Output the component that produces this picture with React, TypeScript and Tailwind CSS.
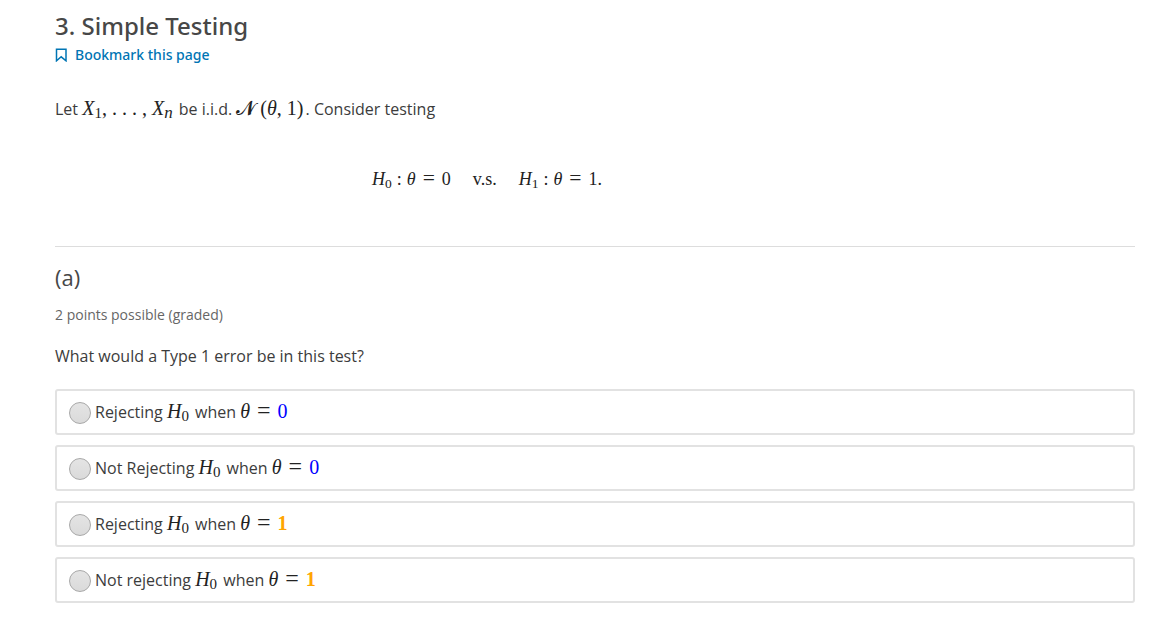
import type { ReactNode } from 'react'

type Choice = { id: string; lead: string; value: number; color: string }

const choices: Choice[] = [
  { id: 'reject-0', lead: 'Rejecting', value: 0, color: 'text-[#0000ff]' },
  { id: 'not-reject-0', lead: 'Not Rejecting', value: 0, color: 'text-[#0000ff]' },
  { id: 'reject-1', lead: 'Rejecting', value: 1, color: 'text-[#ffa500] font-bold' },
  { id: 'not-reject-1', lead: 'Not rejecting', value: 1, color: 'text-[#ffa500] font-bold' },
]

function MathText({ children, className = 'text-xl mr-0.5' }: { children: ReactNode; className?: string }) {
  return (
    <span className={`font-['Liberation_Serif',serif] leading-none whitespace-nowrap text-[#222] ${className}`}>
      {children}
    </span>
  )
}

function Sym({ name, sub, italicSub }: { name: string; sub?: string; italicSub?: boolean }) {
  return (
    <>
      <i>{name}</i>
      {sub && <sub className={`-bottom-[3px] ${italicSub ? 'text-[85%] italic' : 'text-[75%]'}`}>{sub}</sub>}
    </>
  )
}

const Colon = () => <span className="mx-[5px]">:</span>
const Equals = () => <span className="mx-[7px] text-[120%] leading-none">=</span>

function BookmarkIcon() {
  return (
    <svg viewBox="0 0 12 14" className="h-[14px] w-3" fill="none" stroke="currentColor" strokeWidth="1.5" aria-hidden="true">
      <path d="M1.5 1.2h9.5v11.6L6.2 8.8l-4.7 4z" />
    </svg>
  )
}

export default function App() {
  return (
    <main className="bg-white pt-2.5 pr-[27px] pb-6 pl-[55px] font-['Open_Sans',sans-serif] text-base text-[#3c3c3c]">
      <h1 className="font-['Noto_Sans','Open_Sans',sans-serif] text-2xl font-medium text-[#474747]">
        3. Simple Testing
      </h1>
      <a
        href="#bookmark"
        className="mt-[3px] flex items-center gap-2 font-['Noto_Sans','Open_Sans',sans-serif] text-sm font-medium text-[#0075b4]"
      >
        <BookmarkIcon />
        Bookmark this page
      </a>

      <p className="mt-[30px] leading-7">
        Let{' '}
        <MathText>
          <Sym name="X" sub="1" />, . . . , <Sym name="X" sub="n" italicSub />
        </MathText>{' '}
        be i.i.d.{' '}
        <MathText>
          𝓝 (<i>θ</i>, 1)
        </MathText>
        . Consider testing
      </p>

      <div className="mt-[45px] flex w-4/5 items-baseline justify-center gap-[22px]">
        <MathText className="text-lg">
          <Sym name="H" sub="0" />
          <Colon />
          <i>θ</i>
          <Equals />0
        </MathText>
        <MathText className="text-lg">v.s.</MathText>
        <MathText className="text-lg">
          <Sym name="H" sub="1" />
          <Colon />
          <i>θ</i>
          <Equals />
          1.
        </MathText>
      </div>

      <hr className="mt-14 border-[#ddd]" />

      <section>
        <h2 className="mt-4 text-[22px] leading-7 text-[#474747]">(a)</h2>
        <p className="mt-3.5 text-sm text-[#666]">2 points possible (graded)</p>
        <form className="mt-[19px]">
          <fieldset>
            <legend>What would a Type 1 error be in this test?</legend>
            <div className="mt-[21px] flex flex-col gap-2.5">
              {choices.map((c) => (
                <label
                  key={c.id}
                  htmlFor={c.id}
                  className="flex h-[46px] items-center gap-1 rounded-[3px] border-2 border-[#e2e2e2] px-3"
                >
                  <input
                    id={c.id}
                    type="radio"
                    name="type-1-error"
                    className="mt-0.5 size-[22px] shrink-0 appearance-none rounded-full border border-[#a8a8a8] bg-linear-to-b from-[#e4e4e4] to-[#dadada] checked:bg-[#0075b4]"
                  />
                  <span className="pb-0.5 leading-6">
                    {c.lead}{' '}
                    <MathText>
                      <Sym name="H" sub="0" />
                    </MathText>{' '}
                    when{' '}
                    <MathText>
                      <i>θ</i>
                      <Equals />
                      <span className={c.color}>{c.value}</span>
                    </MathText>
                  </span>
                </label>
              ))}
            </div>
          </fieldset>
        </form>
      </section>
    </main>
  )
}
